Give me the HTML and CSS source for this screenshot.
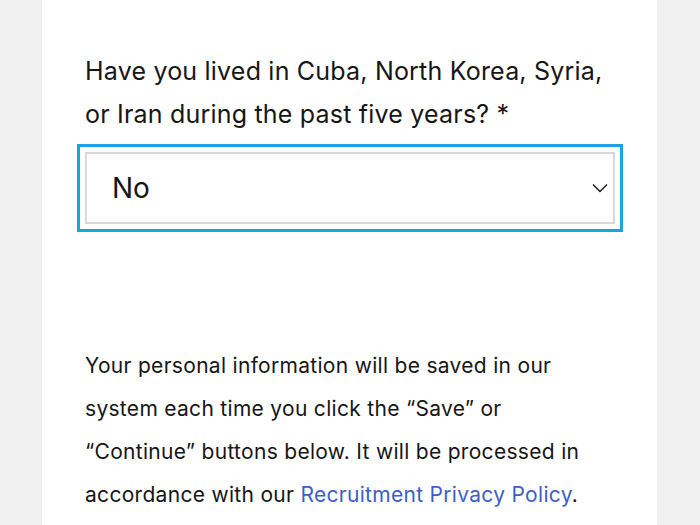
FILE: index.html
```html
<!DOCTYPE html>
<html lang="en">
<head>
  <meta charset="UTF-8" />
  <meta name="viewport" content="width=device-width, initial-scale=1.0" />
  <title>Application</title>
  <link rel="stylesheet" href="styles.css">
</head>
<body>
  <main class="page">
    <div class="field">
      <label class="question" for="sanctioned">Have you lived in Cuba, North Korea, Syria, or Iran during the past five years? *</label>
      <div class="select-wrap">
        <select id="sanctioned" class="select">
          <option>No</option>
          <option>Yes</option>
        </select>
        <svg class="chevron" width="16" height="10" viewBox="0 0 16 10">
          <path d="M1 1.5 L8 8.5 L15 1.5" fill="none" stroke="#161616" stroke-width="1.4" />
        </svg>
      </div>
    </div>

    <p class="notice">Your personal information will be saved in our system each time you click the “Save” or “Continue” buttons below. It will be processed in accordance with our <a href="#">Recruitment Privacy Policy</a>.</p>
  </main>
</body>
</html>
```

FILE: styles.css
```css
* {
  box-sizing: border-box;
}
body {
  margin: 0;
  background: #f0f0f0;
  font-family: Inter, 'Noto Sans', sans-serif;
  color: #161616;
}
.page {
  width: 615px;
  min-height: 100vh;
  margin-left: 42px;
  background: #ffffff;
  padding: 50px 42px 0 43px;
}
.question {
  display: block;
  font-size: 25px;
  letter-spacing: 0.2px;
  line-height: 43px;
  margin-bottom: 16px;
}
.select-wrap {
  position: relative;
  outline: 3px solid #1aa3e0;
  outline-offset: 5px;
}
.select {
  display: block;
  width: 100%;
  height: 72px;
  appearance: none;
  -webkit-appearance: none;
  border: 2px solid #d8d8d8;
  border-radius: 0;
  background: #ffffff;
  padding: 0 25px;
  font-family: inherit;
  font-size: 28px;
  color: #161616;
}
.chevron {
  position: absolute;
  right: 7px;
  top: 31px;
  pointer-events: none;
}
.notice {
  margin: 120px 0 0;
  font-size: 21px;
  letter-spacing: 0.3px;
  line-height: 43px;
}
.notice a {
  color: #3d5fc4;
  text-decoration: none;
}
```
